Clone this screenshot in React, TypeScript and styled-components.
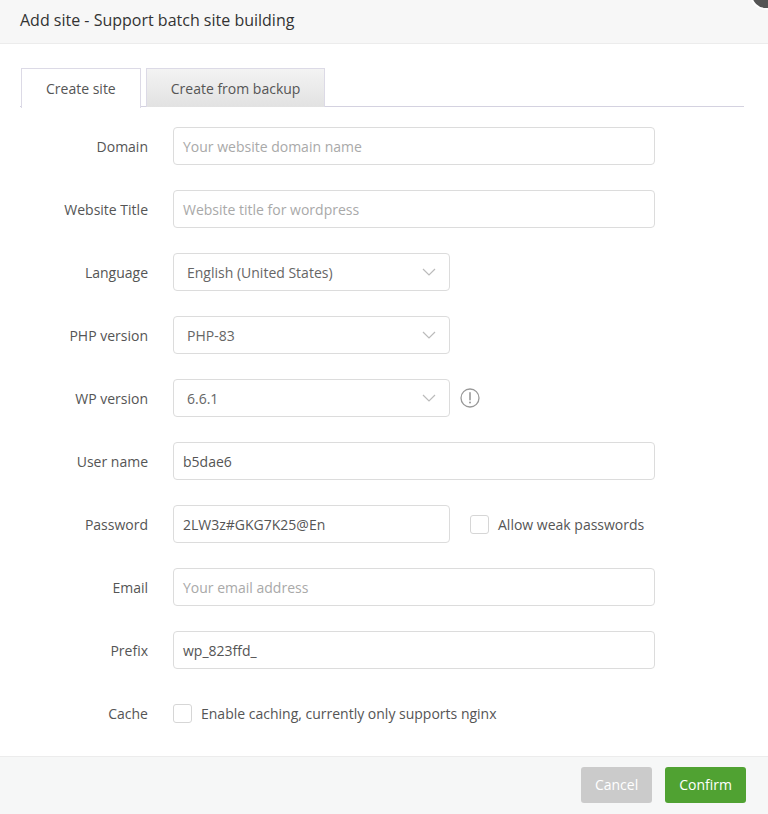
import styled, {createGlobalStyle} from 'styled-components';

const GlobalStyle = createGlobalStyle`
  html, body {
    margin: 0;
    padding: 0;
    background: #fff;
  }
  body {
    font-family: "Open Sans", "Noto Sans", "Liberation Sans", sans-serif;
    color: #555;
  }
  * {
    box-sizing: border-box;
  }
`;

type Field = {
  label: string;
  kind: 'input' | 'select';
  value?: string;
  placeholder?: string;
  short?: boolean;
  extra?: 'warn' | 'weak';
};

const fields: Field[] = [
  {label: 'Domain', kind: 'input', placeholder: 'Your website domain name'},
  {label: 'Website Title', kind: 'input', placeholder: 'Website title for wordpress'},
  {label: 'Language', kind: 'select', value: 'English (United States)', short: true},
  {label: 'PHP version', kind: 'select', value: 'PHP-83', short: true},
  {label: 'WP version', kind: 'select', value: '6.6.1', short: true, extra: 'warn'},
  {label: 'User name', kind: 'input', value: 'b5dae6'},
  {label: 'Password', kind: 'input', value: '2LW3z#GKG7K25@En', short: true, extra: 'weak'},
  {label: 'Email', kind: 'input', placeholder: 'Your email address'},
  {label: 'Prefix', kind: 'input', value: 'wp_823ffd_'},
];

const Chevron = () => (
  <svg width="14" height="8" viewBox="0 0 14 8" fill="none">
    <path d="M1 1l6 6 6-6" stroke="#bbb" strokeWidth="1.2" />
  </svg>
);

const WarnIcon = () => (
  <svg width="20" height="20" viewBox="0 0 20 20" fill="none">
    <circle cx="10" cy="10" r="9" stroke="#999" strokeWidth="1.3" />
    <path d="M10 4.8v7" stroke="#999" strokeWidth="1.6" strokeLinecap="round" />
    <circle cx="10" cy="14.6" r="1" fill="#999" />
  </svg>
);

export default function App() {
  return (
    <>
      <GlobalStyle />
      <Dialog>
        <CloseDot />
        <Header>Add site - Support batch site building</Header>
        <Body>
          <Tabs>
            <Tab $active>Create site</Tab>
            <Tab>Create from backup</Tab>
          </Tabs>
          <Form>
            {fields.map((f) => (
              <Row key={f.label}>
                <Label>{f.label}</Label>
                <Control>
                  {f.kind === 'input' ? (
                    <TextBox $short={f.short} $placeholder={!f.value}>
                      {f.value || f.placeholder}
                    </TextBox>
                  ) : (
                    <SelectBox>
                      <span>{f.value}</span>
                      <Chevron />
                    </SelectBox>
                  )}
                  {f.extra === 'warn' && (
                    <Extra>
                      <WarnIcon />
                    </Extra>
                  )}
                  {f.extra === 'weak' && (
                    <CheckLabel>
                      <CheckBox />
                      Allow weak passwords
                    </CheckLabel>
                  )}
                </Control>
              </Row>
            ))}
            <Row>
              <Label>Cache</Label>
              <Control>
                <CheckLabel $flush>
                  <CheckBox />
                  Enable caching, currently only supports nginx
                </CheckLabel>
              </Control>
            </Row>
          </Form>
        </Body>
        <Footer>
          <Button>Cancel</Button>
          <Button $primary>Confirm</Button>
        </Footer>
      </Dialog>
    </>
  );
}

const Dialog = styled.div`
  position: relative;
  width: 768px;
  height: 814px;
  display: flex;
  flex-direction: column;
  background: #fff;
  overflow: hidden;
`;

const CloseDot = styled.div`
  position: absolute;
  top: -22px;
  right: -14px;
  width: 32px;
  height: 32px;
  border-radius: 50%;
  background: #555;
  border: 2px solid #fff;
`;

const Header = styled.div`
  height: 44px;
  padding: 0 20px;
  display: flex;
  align-items: center;
  background: #f7f7f7;
  border-bottom: 1px solid #ececec;
  font-size: 16px;
  color: #333;
  padding-bottom: 4px;
`;

const Body = styled.div`
  flex: 1;
  padding: 24px 24px 0 20px;
`;

const Tabs = styled.div`
  display: flex;
  gap: 5px;
  height: 39px;
  border-bottom: 1px solid #d4d2e0;
  padding-left: 1px;
`;

const Tab = styled.div<{$active?: boolean}>`
  height: 39px;
  padding: 0 24px;
  display: flex;
  align-items: center;
  font-size: 14px;
  color: #555;
  border: 1px solid #dcdae6;
  border-bottom: none;
  background: ${({$active}) =>
    $active ? '#fff' : 'linear-gradient(#f3f3f3, #e2e2e2)'};
  margin-bottom: ${({$active}) => ($active ? '-1px' : '0')};
  height: ${({$active}) => ($active ? '40px' : '39px')};
`;

const Form = styled.div`
  display: flex;
  flex-direction: column;
  gap: 25px;
  padding-top: 20px;
`;

const Row = styled.div`
  display: flex;
  align-items: center;
  height: 38px;
`;

const Label = styled.div`
  width: 128px;
  text-align: right;
  font-size: 14px;
  color: #555;
  margin-right: 25px;
`;

const Control = styled.div`
  display: flex;
  align-items: center;
`;

const TextBox = styled.div<{$short?: boolean; $placeholder?: boolean}>`
  width: ${({$short}) => ($short ? '277px' : '482px')};
  height: 38px;
  border: 1px solid #dcdcdc;
  border-radius: 4px;
  padding: 0 9px;
  display: flex;
  align-items: center;
  font-size: 14px;
  color: ${({$placeholder}) => ($placeholder ? '#a9a9a9' : '#555')};
`;

const SelectBox = styled.div`
  width: 277px;
  height: 38px;
  border: 1px solid #dcdcdc;
  border-radius: 4px;
  padding: 0 13px 0 13px;
  display: flex;
  align-items: center;
  justify-content: space-between;
  font-size: 14px;
  color: #666;
`;

const Extra = styled.div`
  display: flex;
  margin-left: 10px;
`;

const CheckLabel = styled.label<{$flush?: boolean}>`
  display: flex;
  align-items: center;
  gap: 9px;
  margin-left: ${({$flush}) => ($flush ? '0' : '20px')};
  font-size: 14px;
  color: #555;
`;

const CheckBox = styled.span`
  width: 19px;
  height: 19px;
  border: 1px solid #d6d6d6;
  border-radius: 3px;
  background: #fff;
`;

const Footer = styled.div`
  height: 58px;
  display: flex;
  justify-content: flex-end;
  align-items: center;
  gap: 13px;
  padding-right: 22px;
  padding-bottom: 2px;
  background: #f6f7f7;
  border-top: 1px solid #ececec;
`;

const Button = styled.button<{$primary?: boolean}>`
  height: 36px;
  padding: 0 14px;
  border: none;
  border-radius: 3px;
  font-family: inherit;
  font-size: 14px;
  color: #fff;
  background: ${({$primary}) => ($primary ? '#50a232' : '#cbcbcb')};
`;
